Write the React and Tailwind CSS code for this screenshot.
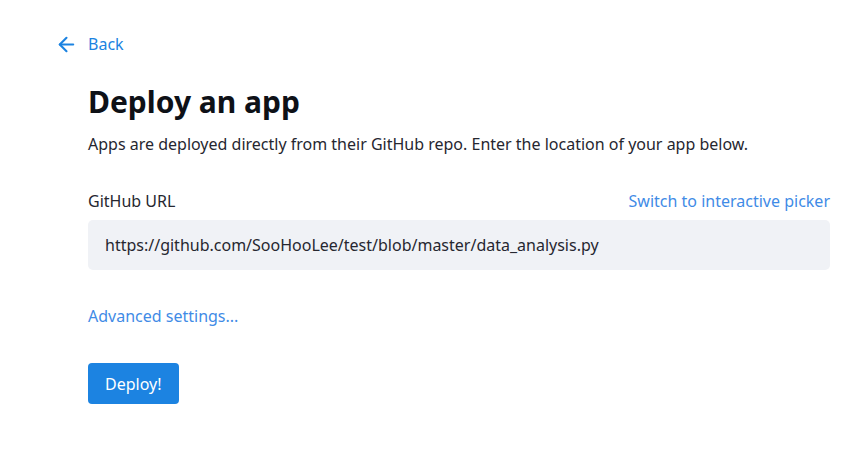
import { ArrowLeft } from "lucide-react";

export default function App() {
    const font = { fontFamily: '"Noto Sans", "Open Sans", sans-serif' };

    return (
        <div className="min-h-screen w-full bg-white text-[#262730]" style={font}>
            {/* lien retour */}
            <div className="pt-[31px] pl-[55px]">
                <a href="#" className="flex items-center gap-[10px] text-[#1c83e1] text-[16px] leading-[26px]">
                    <ArrowLeft size={23} strokeWidth={2.2} />
                    <span>Back</span>
                </a>
            </div>

            <div className="pl-[88px] pr-[35px] pt-[23px]">
                <h1 className="text-[30px] font-bold leading-[44px] text-[#0e1117]">Deploy an app</h1>
                <p className="text-[16px] leading-[24px] mt-[8px]">
                    Apps are deployed directly from their GitHub repo. Enter the location of your app below.
                </p>

                <div className="mt-[33px] flex items-end justify-between">
                    <label className="text-[16px] leading-[24px]">GitHub URL</label>
                    <a href="#" className="text-[16px] leading-[24px] text-[#3f8be6]">Switch to interactive picker</a>
                </div>
                <div className="mt-[7px] h-[50px] rounded-[5px] bg-[#f0f2f6] flex items-center px-[17px] text-[16px]">
                    https://github.com/SooHooLee/test/blob/master/data_analysis.py
                </div>

                <a href="#" className="block mt-[34px] text-[16px] leading-[24px] text-[#3f8be6]">Advanced settings...</a>

                <button className="mt-[35px] h-[41px] px-[17px] rounded-[4px] bg-[#1c83e1] text-white text-[16px]">
                    Deploy!
                </button>
            </div>
        </div>
    );
}
